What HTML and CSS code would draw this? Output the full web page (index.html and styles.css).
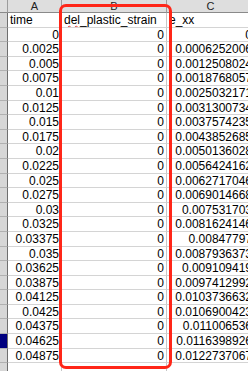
FILE: index.html
```html
<!DOCTYPE html>
<html>
<head>
<meta charset="utf-8">
<link rel="stylesheet" href="styles.css">
</head>
<body>
<div class="sheet">
  <div class="grid">
    <div class="corner"></div><div class="colhead">A</div><div class="colhead">B</div><div class="colhead">C</div>
    <div class="rowhead"></div><div class="cell">time</div><div class="cell"><span class="spell">del</span>_plastic_strain</div><div class="cell">e_xx</div>
    <div class="rowhead"></div><div class="cell num">0</div><div class="cell num">0</div><div class="cell num">0</div>
    <div class="rowhead"></div><div class="cell num">0.0025</div><div class="cell num">0</div><div class="cell num">0.0006252006</div>
    <div class="rowhead"></div><div class="cell num">0.005</div><div class="cell num">0</div><div class="cell num">0.0012508024</div>
    <div class="rowhead"></div><div class="cell num">0.0075</div><div class="cell num">0</div><div class="cell num">0.0018768057</div>
    <div class="rowhead"></div><div class="cell num">0.01</div><div class="cell num">0</div><div class="cell num">0.0025032171</div>
    <div class="rowhead"></div><div class="cell num">0.0125</div><div class="cell num">0</div><div class="cell num">0.0031300734</div>
    <div class="rowhead"></div><div class="cell num">0.015</div><div class="cell num">0</div><div class="cell num">0.0037574235</div>
    <div class="rowhead"></div><div class="cell num">0.0175</div><div class="cell num">0</div><div class="cell num">0.0043852685</div>
    <div class="rowhead"></div><div class="cell num">0.02</div><div class="cell num">0</div><div class="cell num">0.0050136028</div>
    <div class="rowhead"></div><div class="cell num">0.0225</div><div class="cell num">0</div><div class="cell num">0.0056424162</div>
    <div class="rowhead"></div><div class="cell num">0.025</div><div class="cell num">0</div><div class="cell num">0.0062717046</div>
    <div class="rowhead"></div><div class="cell num">0.0275</div><div class="cell num">0</div><div class="cell num">0.0069014668</div>
    <div class="rowhead"></div><div class="cell num">0.03</div><div class="cell num">0</div><div class="cell num">0.007531703</div>
    <div class="rowhead"></div><div class="cell num">0.0325</div><div class="cell num">0</div><div class="cell num">0.0081624146</div>
    <div class="rowhead"></div><div class="cell num">0.03375</div><div class="cell num">0</div><div class="cell num">0.00847797</div>
    <div class="rowhead"></div><div class="cell num">0.035</div><div class="cell num">0</div><div class="cell num">0.0087936373</div>
    <div class="rowhead"></div><div class="cell num">0.03625</div><div class="cell num">0</div><div class="cell num">0.009109419</div>
    <div class="rowhead"></div><div class="cell num">0.03875</div><div class="cell num">0</div><div class="cell num">0.0097412992</div>
    <div class="rowhead"></div><div class="cell num">0.04125</div><div class="cell num">0</div><div class="cell num">0.0103736632</div>
    <div class="rowhead"></div><div class="cell num">0.0425</div><div class="cell num">0</div><div class="cell num">0.0106900423</div>
    <div class="rowhead"></div><div class="cell num">0.04375</div><div class="cell num">0</div><div class="cell num">0.011006536</div>
    <div class="rowhead selected"></div><div class="cell num">0.04625</div><div class="cell num">0</div><div class="cell num">0.0116398926</div>
    <div class="rowhead"></div><div class="cell num">0.04875</div><div class="cell num">0</div><div class="cell num">0.0122737067</div>
    <div class="rowhead"></div><div class="cell"></div><div class="cell"></div><div class="cell"></div>
  </div>
  <div class="highlight"></div>
</div>
</body>
</html>
```

FILE: styles.css
```css
html, body {
  margin: 0;
  padding: 0;
  background: #ffffff;
  overflow: hidden;
}

.sheet {
  position: relative;
  width: 248px;
  height: 371px;
  overflow: hidden;
  font-family: "Liberation Sans", Arial, sans-serif;
  font-size: 12px;
  color: #000;
}

.grid {
  display: grid;
  grid-template-columns: 8px 54px 105px 88px;
  grid-template-rows: 13px;
  grid-auto-rows: 14.6px;
  width: 255px;
}

.corner,
.colhead {
  background: #dedede;
  border-right: 1px solid #9c9c9c;
  border-bottom: 1px solid #8a8a8a;
  box-sizing: border-box;
}

.colhead {
  font-size: 11px;
  line-height: 12px;
  text-align: center;
  color: #222;
}

.rowhead {
  background: #d6d6d6;
  border-right: 1px solid #6e6e6e;
  border-bottom: 1px solid #b0b0b0;
  box-sizing: border-box;
}

.rowhead.selected {
  background: #00007f;
}

.cell {
  border-right: 1px solid #c6c6c6;
  border-bottom: 1px solid #d4d4d4;
  box-sizing: border-box;
  padding: 0 2px;
  line-height: 14px;
  white-space: nowrap;
  overflow: hidden;
}

.num {
  text-align: right;
}

.spell {
  text-decoration: underline wavy #e0403a;
  text-decoration-thickness: 1px;
  text-underline-offset: 1px;
}

.highlight {
  position: absolute;
  left: 59px;
  top: 4px;
  width: 113px;
  height: 365px;
  box-sizing: border-box;
  border: 3.5px solid #ff2618;
  border-radius: 7px;
}
```
